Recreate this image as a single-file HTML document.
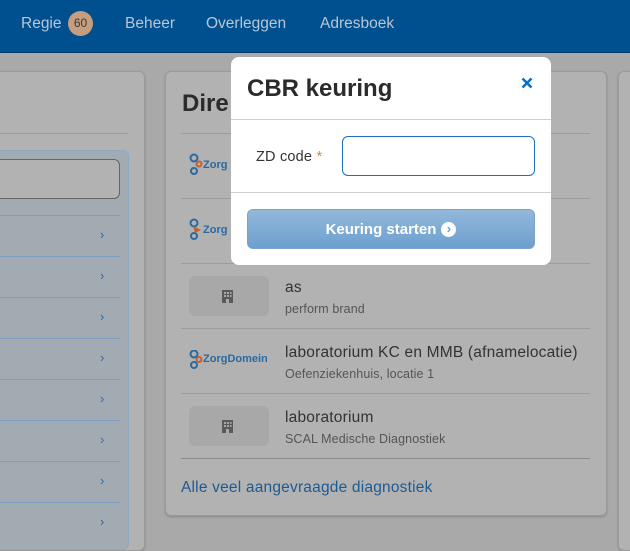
<!DOCTYPE html>
<html><head><meta charset="utf-8"><style>
*{box-sizing:border-box;margin:0;padding:0}
body{width:630px;height:537px;overflow:hidden;background:#a9a9a9;font-family:"Liberation Sans","DejaVu Sans",sans-serif;position:relative}
.nav{position:absolute;left:0;top:0;width:630px;height:53px;background:#00508f;border-bottom:1px solid #003a6a}
.nav span{position:absolute;top:15px;font-size:15.5px;color:#b8c6d6}
.badge{position:absolute;left:68px;top:11px;width:25px;height:25px;border-radius:50%;background:#c69e7f;color:#3a3a3a;font-size:12px;text-align:center;line-height:25px}
.card{position:absolute;background:#b2b2b2;border:1px solid #9a9a9a;border-radius:6px;box-shadow:0 1px 2px rgba(0,0,0,.2)}
.hl{position:absolute;height:1px;background:#9c9c9c}
.chev{position:absolute;left:100px;color:#2e6aa8;font-size:13px}
.logo{position:absolute;left:189px;width:80px;height:40px;border-radius:6px;background:#a8a8a8}
.bld{position:absolute;left:221px;width:13px;height:14px}
.t1{position:absolute;left:285px;font-size:15.5px;letter-spacing:0.2px;color:#333}
.t2{position:absolute;left:285px;font-size:12.5px;letter-spacing:0.1px;color:#555}
.zd{position:absolute;left:189px;font-size:11px;font-weight:bold;color:#2a6aa0}
.modal{position:absolute;left:231px;top:57px;width:320px;height:208px;background:#fff;border-radius:8px}
</style></head><body>
<div class="nav">
<span style="left:21px">Regie</span><div class="badge">60</div>
<span style="left:125px">Beheer</span>
<span style="left:206px">Overleggen</span>
<span style="left:320px">Adresboek</span>
</div>

<div class="card" style="left:-10px;top:71px;width:155px;height:480px"></div>
<div class="hl" style="left:0;top:133px;width:128px"></div>
<div style="position:absolute;left:-5px;top:150px;width:134px;height:400px;background:#a2aab2;border:1px solid #8fa8c4;border-radius:6px"></div>
<div style="position:absolute;left:-5px;top:159px;width:125px;height:40px;background:#b2b2b2;border:1px solid #666;border-radius:6px"></div>
<div style="position:absolute;left:0;top:215px;width:120px;height:1px;background:#7d9ec2"></div>
<div style="position:absolute;left:0;top:256px;width:120px;height:1px;background:#7d9ec2"></div>
<div style="position:absolute;left:0;top:297px;width:120px;height:1px;background:#7d9ec2"></div>
<div style="position:absolute;left:0;top:338px;width:120px;height:1px;background:#7d9ec2"></div>
<div style="position:absolute;left:0;top:379px;width:120px;height:1px;background:#7d9ec2"></div>
<div style="position:absolute;left:0;top:420px;width:120px;height:1px;background:#7d9ec2"></div>
<div style="position:absolute;left:0;top:461px;width:120px;height:1px;background:#7d9ec2"></div>
<div style="position:absolute;left:0;top:502px;width:120px;height:1px;background:#7d9ec2"></div>
<div class="chev" style="top:227px">›</div><div class="chev" style="top:268px">›</div>
<div class="chev" style="top:309px">›</div><div class="chev" style="top:350px">›</div>
<div class="chev" style="top:391px">›</div><div class="chev" style="top:432px">›</div>
<div class="chev" style="top:473px">›</div><div class="chev" style="top:514px">›</div>

<div class="card" style="left:165px;top:71px;width:442px;height:445px"></div>
<div class="card" style="left:618px;top:71px;width:40px;height:480px"></div>
<div style="position:absolute;left:182px;top:90px;font-size:24px;font-weight:bold;color:#2b2b2b">Dire</div>
<div class="hl" style="left:181px;top:133px;width:409px"></div>
<div class="hl" style="left:181px;top:198px;width:409px"></div>
<div class="hl" style="left:181px;top:263px;width:409px"></div>
<div class="hl" style="left:181px;top:328px;width:409px"></div>
<div class="hl" style="left:181px;top:393px;width:409px"></div>
<div class="hl" style="left:181px;top:458px;width:409px;background:#8a8a8a"></div>

<svg style="position:absolute;left:189px;top:153px" width="14" height="24"><circle cx="5" cy="5" r="3.5" fill="none" stroke="#2a6aa0" stroke-width="2"/><circle cx="5" cy="18" r="3" fill="none" stroke="#2a6aa0" stroke-width="2"/><circle cx="10" cy="11" r="2.5" fill="none" stroke="#c8602a" stroke-width="2"/></svg>
<div class="zd" style="left:203px;top:159px">Zorg</div>
<svg style="position:absolute;left:189px;top:218px" width="14" height="24"><circle cx="5" cy="5" r="3.5" fill="none" stroke="#2a6aa0" stroke-width="2"/><circle cx="5" cy="18" r="3" fill="none" stroke="#2a6aa0" stroke-width="2"/><path d="M4 8 L12 12 L6 15 Z" fill="#c8602a"/></svg>
<div class="zd" style="left:203px;top:224px">Zorg</div>

<div class="logo" style="top:276px"></div>
<svg class="bld" style="top:289px" viewBox="0 0 13 14"><rect x="1" y="1" width="11" height="13" fill="#5a5a5a"/><g fill="#a8a8a8"><rect x="3" y="3" width="2" height="2"/><rect x="6" y="3" width="2" height="2"/><rect x="9" y="3" width="1.5" height="2"/><rect x="3" y="6" width="2" height="2"/><rect x="6" y="6" width="2" height="2"/><rect x="9" y="6" width="1.5" height="2"/><rect x="5" y="10" width="3" height="4"/></g></svg>
<div class="t1" style="top:279px">as</div>
<div class="t2" style="top:302px">perform brand</div>

<svg style="position:absolute;left:189px;top:350px" width="14" height="24"><circle cx="5" cy="4" r="3.5" fill="none" stroke="#2a6aa0" stroke-width="2"/><circle cx="5" cy="15" r="3" fill="none" stroke="#2a6aa0" stroke-width="2"/><circle cx="10" cy="9.5" r="2.5" fill="none" stroke="#c8602a" stroke-width="2"/></svg>
<div class="zd" style="left:203px;top:353px">ZorgDomein</div>
<div class="t1" style="top:344px">laboratorium KC en MMB (afnamelocatie)</div>
<div class="t2" style="top:367px">Oefenziekenhuis, locatie 1</div>

<div class="logo" style="top:406px"></div>
<svg class="bld" style="top:419px" viewBox="0 0 13 14"><rect x="1" y="1" width="11" height="13" fill="#5a5a5a"/><g fill="#a8a8a8"><rect x="3" y="3" width="2" height="2"/><rect x="6" y="3" width="2" height="2"/><rect x="9" y="3" width="1.5" height="2"/><rect x="3" y="6" width="2" height="2"/><rect x="6" y="6" width="2" height="2"/><rect x="9" y="6" width="1.5" height="2"/><rect x="5" y="10" width="3" height="4"/></g></svg>
<div class="t1" style="top:409px">laboratorium</div>
<div class="t2" style="top:432px">SCAL Medische Diagnostiek</div>

<div style="position:absolute;left:181px;top:479px;font-size:15.5px;letter-spacing:0.2px;color:#1e5a94">Alle veel aangevraagde diagnostiek</div>

<div class="modal">
<div style="position:absolute;left:16px;top:18px;font-size:24px;font-weight:bold;color:#2b2b2b">CBR keuring</div>
<svg style="position:absolute;left:290px;top:20px" width="12" height="12"><path d="M1.5 1.5 L10.5 10.5 M10.5 1.5 L1.5 10.5" stroke="#0a6fc8" stroke-width="2.6"/></svg>
<div style="position:absolute;left:0;top:62px;width:320px;height:1px;background:#d0d0d0"></div>
<div style="position:absolute;left:25px;top:92px;font-size:14.5px;letter-spacing:0.2px;color:#333">ZD code <span style="color:#e08a2a">*</span></div>
<div style="position:absolute;left:111px;top:79px;width:193px;height:40px;border:1px solid #1a6fc4;border-radius:6px"></div>
<div style="position:absolute;left:0;top:135px;width:320px;height:1px;background:#d0d0d0"></div>
<div style="position:absolute;left:16px;top:152px;width:288px;height:40px;border-radius:6px;border:1px solid #7aa3c9;background:linear-gradient(#93b8da,#6da0cf);color:#fff;font-size:15px;font-weight:bold;display:flex;align-items:center;justify-content:center;padding-top:1px">Keuring starten<span style="display:inline-block;margin-left:5px;width:15px;height:15px;border-radius:50%;background:#fff;color:#6da0cf;font-size:13px;line-height:14px;text-align:center">›</span></div>
</div>
</body></html>
